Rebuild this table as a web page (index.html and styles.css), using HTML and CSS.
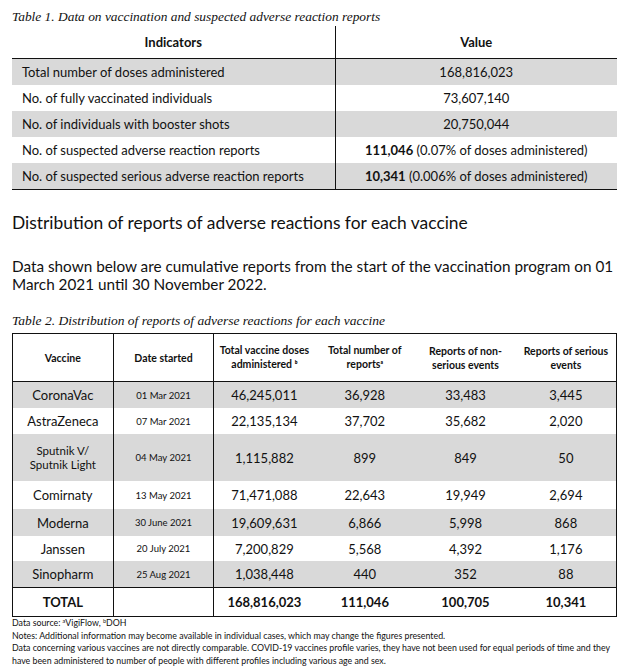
FILE: index.html
```html
<!DOCTYPE html>
<html>
<head>
<meta charset="utf-8">
<link rel="stylesheet" href="styles.css">
</head>
<body>
<div class="page">
  <div class="caption cap1">Table 1. Data on vaccination and suspected adverse reaction reports</div>
  <table class="t1">
    <thead>
      <tr><th class="c-ind">Indicators</th><th class="c-val">Value</th></tr>
    </thead>
    <tbody>
      <tr class="gray"><td class="c-ind">Total number of doses administered</td><td class="c-val">168,816,023</td></tr>
      <tr><td class="c-ind">No. of fully vaccinated individuals</td><td class="c-val">73,607,140</td></tr>
      <tr class="gray"><td class="c-ind">No. of individuals with booster shots</td><td class="c-val">20,750,044</td></tr>
      <tr><td class="c-ind">No. of suspected adverse reaction reports</td><td class="c-val"><b>111,046</b> (0.07% of doses administered)</td></tr>
      <tr class="gray"><td class="c-ind">No. of suspected serious adverse reaction reports</td><td class="c-val"><b>10,341</b> (0.006% of doses administered)</td></tr>
    </tbody>
  </table>

  <h2 class="heading">Distribution of reports of adverse reactions for each vaccine</h2>
  <p class="lead">Data shown below are cumulative reports from the start of the vaccination program on 01 March 2021 until 30 November 2022.</p>

  <div class="caption cap2">Table 2. Distribution of reports of adverse reactions for each vaccine</div>
  <table class="t2">
    <thead>
      <tr>
        <th class="sep">Vaccine</th>
        <th class="sep">Date started</th>
        <th>Total vaccine doses administered <span class="mod">ᵇ</span></th>
        <th>Total number of reports<span class="mod">ᵃ</span></th>
        <th>Reports of non-serious events</th>
        <th>Reports of serious events</th>
      </tr>
    </thead>
    <tbody>
      <tr class="gray r26"><td class="sep name">CoronaVac</td><td class="sep date">01 Mar 2021</td><td>46,245,011</td><td>36,928</td><td>33,483</td><td>3,445</td></tr>
      <tr class="r26"><td class="sep name">AstraZeneca</td><td class="sep date">07 Mar 2021</td><td>22,135,134</td><td>37,702</td><td>35,682</td><td>2,020</td></tr>
      <tr class="gray r48"><td class="sep name small">Sputnik V/<br>Sputnik Light</td><td class="sep date">04 May 2021</td><td>1,115,882</td><td>899</td><td>849</td><td>50</td></tr>
      <tr class="r28"><td class="sep name">Comirnaty</td><td class="sep date">13 May 2021</td><td>71,471,088</td><td>22,643</td><td>19,949</td><td>2,694</td></tr>
      <tr class="gray r27"><td class="sep name">Moderna</td><td class="sep date">30 June 2021</td><td>19,609,631</td><td>6,866</td><td>5,998</td><td>868</td></tr>
      <tr class="r25"><td class="sep name">Janssen</td><td class="sep date">20 July 2021</td><td>7,200,829</td><td>5,568</td><td>4,392</td><td>1,176</td></tr>
      <tr class="gray r26"><td class="sep name">Sinopharm</td><td class="sep date">25 Aug 2021</td><td>1,038,448</td><td>440</td><td>352</td><td>88</td></tr>
      <tr class="total r28"><td class="sep name">TOTAL</td><td class="sep"></td><td>168,816,023</td><td>111,046</td><td>100,705</td><td>10,341</td></tr>
    </tbody>
  </table>
  <div class="notes">
    <div>Data source: <sup>a</sup>VigiFlow, <sup>b</sup>DOH</div>
    <div>Notes: Additional information may become available in individual cases, which may change the figures presented.</div>
    <div>Data concerning various vaccines are not directly comparable. COVID-19 vaccines profile varies, they have not been used for equal periods of time and they have been administered to number of people with different profiles including various age and sex.</div>
  </div>
</div>
</body>
</html>
```

FILE: styles.css
```css
html, body {
  margin: 0;
  padding: 0;
  background: #ffffff;
}

.page {
  padding: 8px 5px 0 12px;
  font-family: Lato, "Noto Sans", sans-serif;
  color: #111;
}

.caption {
  font-family: "Liberation Serif", "Times New Roman", serif;
  font-style: italic;
  color: #111;
}

.cap1 {
  font-size: 13.4px;
  line-height: 18px;
  height: 18px;
}

.t1 {
  width: 605px;
  border-collapse: collapse;
  font-size: 13px;
}

.t1 th {
  height: 32px;
  padding: 0;
  font-weight: 700;
  border-bottom: 1px solid #111;
  text-align: center;
}

.t1 td {
  height: 26px;
  padding: 0;
}

.t1 tbody tr:last-child td {
  border-bottom: 1px solid #111;
}

.t1 .c-ind {
  box-sizing: border-box;
  width: 323px;
  border-right: 1px solid #111;
}

.t1 td.c-ind {
  padding-left: 10px;
  text-align: left;
}

.t1 .c-val {
  text-align: center;
}

.gray td {
  background: #d9d9d9;
}

.heading {
  margin: 21px 0 0;
  font-size: 17.4px;
  font-weight: 400;
  line-height: 24px;
}

.lead {
  margin: 22px 0 0;
  font-size: 15.3px;
  line-height: 18px;
  width: 605px;
}

.cap2 {
  margin-top: 20px;
  font-size: 13.5px;
  line-height: 16px;
  height: 16px;
}

.t2 {
  margin-top: 4px;
  width: 605px;
  border-collapse: collapse;
  border: 1px solid #111;
  table-layout: fixed;
  font-size: 13px;
  text-align: center;
}

.t2 th {
  height: 47px;
  padding: 0 4px;
  font-size: 10.5px;
  font-weight: 700;
  line-height: 14px;
  border-bottom: 1px solid #111;
}

.t2 .mod {
  font-size: 9px;
}

.t2 td {
  padding: 0;
}

.t2 .sep {
  border-right: 1px solid #111;
}

.t2 .name {
  font-size: 13px;
}

.t2 .name.small {
  font-size: 11.5px;
  line-height: 14px;
}

.t2 .date {
  font-size: 9.5px;
}

.r25 td { height: 25px; }
.r26 td { height: 26px; }
.r27 td { height: 27px; }
.r28 td { height: 28px; }
.r48 td { height: 47px; }

.total td {
  border-top: 1px solid #111;
  font-weight: 700;
}

.notes {
  font-size: 8.8px;
  line-height: 12.6px;
  width: 606px;
}

.notes sup {
  font-size: 5.5px;
  line-height: 0;
  vertical-align: 3px;
}
```
